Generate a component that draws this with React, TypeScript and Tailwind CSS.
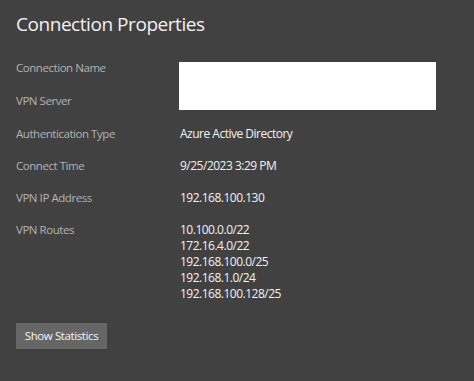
export default function App() {
  const routes = [
    "10.100.0.0/22",
    "172.16.4.0/22",
    "192.168.100.0/25",
    "192.168.1.0/24",
    "192.168.100.128/25",
  ];

  const rows = [
    { label: "Authentication Type", value: "Azure Active Directory" },
    { label: "Connect Time", value: "9/25/2023 3:29 PM" },
    { label: "VPN IP Address", value: "192.168.100.130" },
  ];

  const label = "text-[11.5px] tracking-[-0.45px] text-[#b3b3b3]";
  const value = "tracking-[-0.5px] text-[#f2f2f2]";

  return (
    <div
      className="w-[474px] h-[381px] bg-[#414141] px-4 pt-[10px] text-[12px] leading-[16px]"
      style={{ fontFamily: "'Open Sans', 'Noto Sans', sans-serif" }}
    >
      <h1 className="text-[19px] leading-[28px] text-[#f2f2f2] tracking-[-0.45px]">
        Connection Properties
      </h1>

      <div className="mt-[22px] grid grid-cols-[164px_1fr] gap-y-4">
        {/* Connection Name + VPN Server share a redacted box */}
        <div className={label}>Connection Name</div>
        <div className="row-span-2 -ml-px mt-[2px] h-[48px] w-[257px] bg-white" />
        <div className={label}>VPN Server</div>

        {rows.map((r) => (
          <div key={r.label} className="contents">
            <div className={label}>{r.label}</div>
            <div className={value}>{r.value}</div>
          </div>
        ))}

        <div className={label}>VPN Routes</div>
        <div className={"flex flex-col " + value}>
          {routes.map((r) => (
            <span key={r}>{r}</span>
          ))}
        </div>
      </div>

      <button className="mt-[21px] h-[26px] w-[91px] bg-[#666666] text-[11.5px] text-[#f5f5f5] tracking-[-0.4px]">
        Show Statistics
      </button>
    </div>
  );
}
